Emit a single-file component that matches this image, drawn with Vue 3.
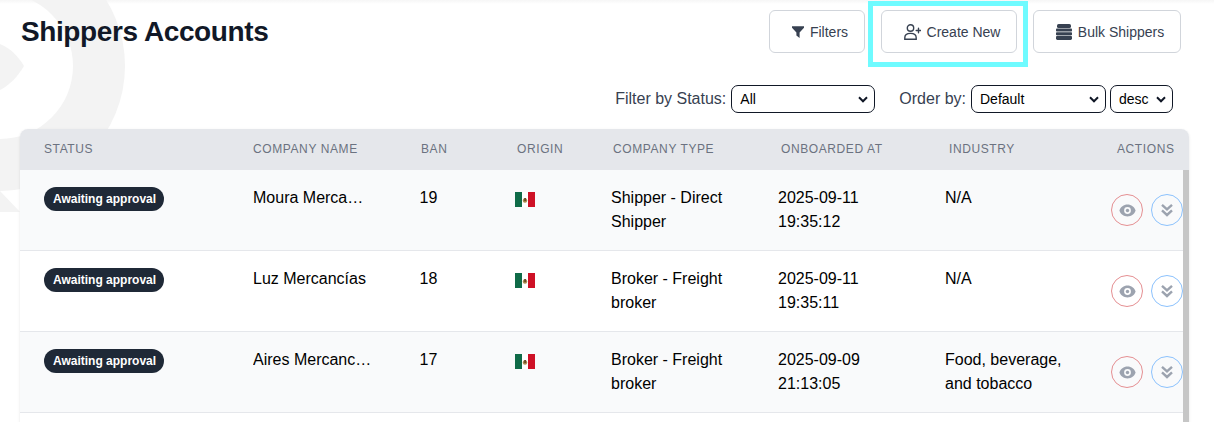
<script setup>
const headers = ['Status', 'Company Name', 'BAN', 'Origin', 'Company Type', 'Onboarded At', 'Industry', 'Actions']
const rows = [
  { company: 'Moura Mercancías', ban: 19, type: 'Shipper - Direct Shipper', at: '2025-09-11 19:35:12', industry: 'N/A' },
  { company: 'Luz Mercancías', ban: 18, type: 'Broker - Freight broker', at: '2025-09-11 19:35:11', industry: 'N/A' },
  { company: 'Aires Mercancías', ban: 17, type: 'Broker - Freight broker', at: '2025-09-09 21:13:05', industry: 'Food, beverage, and tobacco' }
]
</script>

<template>
  <div class="page">
    <svg class="watermark" width="130" height="230" viewBox="0 0 130 230" aria-hidden="true">
      <path d="M0 -59A125 125 0 0 1 0 191L20 212L0 212ZM0 -7L0 139A73 73 0 0 0 0 -7Z" fill="#f3f3f3" fill-rule="evenodd" />
      <path d="M0 44C10 48 18 56 24 66C18 76 10 85 0 90Z" fill="#f3f3f3" />
    </svg>
    <header class="top">
      <h1 class="title">Shippers Accounts</h1>
      <div class="actions-top">
        <button class="btn btn-filters">
          <svg width="12" height="12" viewBox="0 0 12 12"><path d="M0 .2h12v1.600L7.600 6.400V12L4.400 9.600V6.400L0 1.800z" fill="#374151" /></svg>
          Filters
        </button>
        <div class="highlight-wrap">
          <button class="btn btn-create">
            <svg width="17" height="16" viewBox="0 0 17 16" fill="none" stroke="#374151" stroke-width="1.400"><circle cx="6.500" cy="4" r="3.200" /><path d="M.8 15.200v-1.400c0-2.600 2.200-4.400 5.700-4.400s5.700 1.800 5.700 4.400v1.400z" /><path d="M12.200 6.500h4.600M14.500 4.200v4.600" stroke-linecap="round" /></svg>
            Create New
          </button>
          <span class="highlight"></span>
        </div>
        <button class="btn btn-bulk">
          <svg width="16" height="16" viewBox="0 0 16 16" fill="#374151"><rect x="1" y="0" width="14" height="4" rx="1.600" /><rect x="0" y="4.600" width="16" height="3" rx=".8" /><rect x="0" y="8.200" width="16" height="3" rx=".8" /><rect x="0" y="11.800" width="16" height="4.200" rx="1.400" /></svg>
          Bulk Shippers
        </button>
      </div>
    </header>

    <div class="filters">
      <label class="filter-label">Filter by Status:</label>
      <select class="sel sel-status"><option>All</option></select>
      <label class="filter-label order">Order by:</label>
      <select class="sel sel-order"><option>Default</option></select>
      <select class="sel sel-dir"><option>desc</option></select>
    </div>

    <section class="table">
      <div class="thead">
        <div v-for="h in headers" :key="h" class="th">{{ h }}</div>
      </div>
      <div class="tbody">
        <div class="rows">
          <div v-for="r in rows" :key="r.ban" class="row">
            <div class="cell"><span class="badge">Awaiting approval</span></div>
            <div class="cell"><span class="company">{{ r.company }}</span></div>
            <div class="cell">{{ r.ban }}</div>
            <div class="cell flag-cell">
              <svg class="flag" width="20" height="15" viewBox="0 0 20 15">
                <rect width="7" height="15" fill="#0f6b48" />
                <rect x="7" width="6" height="15" fill="#fff" />
                <rect x="13" width="7" height="15" fill="#ce1126" />
                <ellipse cx="10" cy="8.500" rx="2.200" ry="2.200" fill="#a8884a" />
                <rect x="9.200" y="6" width="1.800" height="3" fill="#6b4a2a" />
              </svg>
            </div>
            <div class="cell">{{ r.type }}</div>
            <div class="cell">{{ r.at }}</div>
            <div class="cell">{{ r.industry }}</div>
            <div class="cell-actions">
              <button class="round red">
                <svg width="17" height="17" viewBox="0 0 20 20" fill="#9ca3af"><path d="M10 12a2 2 0 100-4 2 2 0 000 4z" /><path fill-rule="evenodd" d="M.458 10C1.732 5.943 5.522 3 10 3s8.268 2.943 9.542 7c-1.274 4.057-5.064 7-9.542 7S1.732 14.057.458 10zM14 10a4 4 0 11-8 0 4 4 0 018 0z" /></svg>
              </button>
              <button class="round blue">
                <svg width="16" height="16" viewBox="0 0 16 16" fill="none" stroke="#9ca3af" stroke-width="2.400"><path d="M3 2.800l5 4.600 5-4.600M3 8.400L8 13l5-4.600" /></svg>
              </button>
            </div>
          </div>
          <div class="row"></div>
        </div>
        <div class="scrollbar"></div>
      </div>
    </section>
  </div>
</template>

<style>
html, body { margin: 0; background: #fff; overflow: hidden; }
</style>

<style scoped>
.page {
  position: relative;
  width: 1214px;
  height: 422px;
  overflow: hidden;
  font-family: "Liberation Sans", Arial, sans-serif;
  background: linear-gradient(#f6f6f6, #fff 4px);
  box-sizing: border-box;
  color: #000;
}
.watermark { position: absolute; left: 0; top: 0; pointer-events: none; }
.top {
  position: relative;
  display: flex;
  justify-content: space-between;
  align-items: flex-start;
  padding: 10px 33px 0 21px;
  height: 85px;
  box-sizing: border-box;
}
.title {
  margin: 4px 0 0;
  font-size: 28px;
  line-height: 36px;
  font-weight: 700;
  letter-spacing: -0.4px;
  color: #111827;
}
.actions-top { display: flex; gap: 16px; }
.highlight-wrap { position: relative; display: flex; }
.highlight {
  position: absolute;
  left: -13px;
  right: -11px;
  top: -9px;
  bottom: -14px;
  border: 5px solid #6ffbff;
  pointer-events: none;
}
.btn {
  display: flex;
  align-items: center;
  justify-content: center;
  gap: 6px;
  height: 43px;
  padding: 0 0 0 6px;
  background: #fff;
  border: 1px solid #d1d5db;
  border-radius: 6px;
  font: 14px "Liberation Sans", Arial, sans-serif;
  color: #374151;
}
.btn-filters { width: 96px; }
.btn-create { width: 136px; }
.btn-bulk { width: 148px; }
.filters {
  position: relative;
  display: flex;
  justify-content: flex-end;
  align-items: center;
  height: 28px;
  padding-right: 41px;
}
.filter-label { font-size: 16px; color: #374151; margin-right: 5px; }
.order { margin-left: 24px; }
.sel {
  height: 28px;
  box-sizing: border-box;
  border: 1px solid #111827;
  border-radius: 7px;
  background-color: #fff;
  background-image: url("data:image/svg+xml,%3Csvg xmlns='http://www.w3.org/2000/svg' width='10' height='7' viewBox='0 0 10 7'%3E%3Cpath d='M1 1.300l4 4 4-4' fill='none' stroke='%23111827' stroke-width='2'/%3E%3C/svg%3E");
  background-repeat: no-repeat;
  background-position: right 6px center;
  appearance: none;
  font: 14px "Liberation Sans", Arial, sans-serif;
  color: #000;
  padding: 0 18px 0 8px;
}
.sel-status { width: 144px; }
.sel-order { width: 135px; }
.sel-dir { width: 63px; margin-left: 4px; }
.table {
  position: relative;
  margin: 16px 0 0 20px;
  width: 1169px;
  border-radius: 8px 8px 0 0;
  box-shadow: 0 1px 3px rgba(0, 0, 0, 0.1);
  background: #fff;
}
.thead {
  display: grid;
  grid-template-columns: 209px 168px 96px 96px 168px 168px 168px 1fr;
  height: 41px;
  align-items: center;
  padding: 0 0 2px 24px;
  box-sizing: border-box;
  background: #e5e7eb;
  border-radius: 8px 8px 0 0;
}
.th {
  font-size: 12px;
  line-height: 16px;
  text-transform: uppercase;
  letter-spacing: 0.6px;
  color: #6b7280;
  white-space: nowrap;
}
.tbody { display: flex; }
.rows { flex: 1; min-width: 0; }
.scrollbar { width: 6px; background: #c6c6c6; }
.row {
  display: grid;
  grid-template-columns: 209px 166.500px 95.500px 96px 167px 167px 166px 1fr;
  height: 81px;
  box-sizing: border-box;
  padding-left: 24px;
  border-bottom: 1px solid #e5e7eb;
  align-items: start;
}
.row:nth-child(odd) { background: #f9fafb; }
.cell {
  padding: 16px 24px 0 0;
  font-size: 16px;
  line-height: 24px;
}
.badge {
  display: inline-block;
  margin-top: 1px;
  padding: 0 8px 0 9px;
  height: 24px;
  border-radius: 12px;
  background: #1f2937;
  color: #fff;
  font-size: 12px;
  line-height: 24px;
  font-weight: 700;
  white-space: nowrap;
  vertical-align: top;
}
.company {
  display: block;
  max-width: 119px;
  overflow: hidden;
  text-overflow: ellipsis;
  white-space: nowrap;
}
.flag-cell { display: flex; }
.flag { margin-top: 6px; }
.cell-actions { display: flex; gap: 8px; padding-top: 24px; }
.round {
  width: 32px;
  height: 32px;
  padding: 0;
  display: flex;
  align-items: center;
  justify-content: center;
  border-radius: 50%;
  background: transparent;
  flex: none;
  box-sizing: border-box;
}
.red { border: 1.500px solid #e58f92; }
.blue { border: 1.500px solid #8cc2fd; }
</style>
